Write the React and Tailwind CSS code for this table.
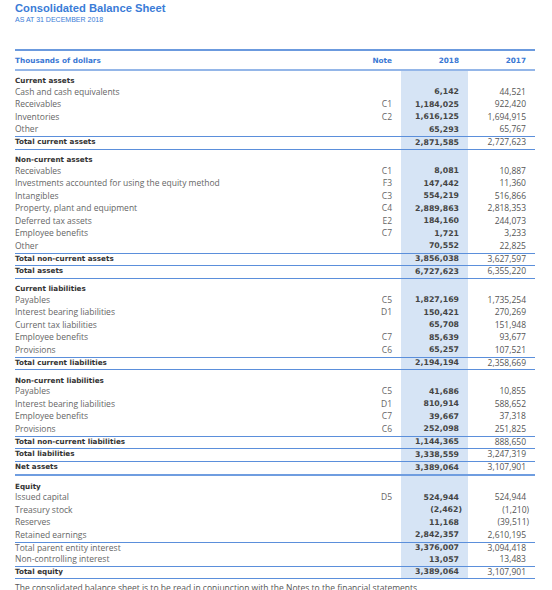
const sheet = [
  { kind: "head", label: "Current assets" },
  { label: "Cash and cash equivalents", cur: "6,142", prev: "44,521" },
  { label: "Receivables", note: "C1", cur: "1,184,025", prev: "922,420" },
  { label: "Inventories", note: "C2", cur: "1,616,125", prev: "1,694,915" },
  { label: "Other", cur: "65,293", prev: "65,767" },
  { kind: "total", top: true, label: "Total current assets", cur: "2,871,585", prev: "2,727,623" },
  { kind: "head", label: "Non-current assets" },
  { label: "Receivables", note: "C1", cur: "8,081", prev: "10,887" },
  { label: "Investments accounted for using the equity method", note: "F3", cur: "147,442", prev: "11,360" },
  { label: "Intangibles", note: "C3", cur: "554,219", prev: "516,866" },
  { label: "Property, plant and equipment", note: "C4", cur: "2,889,863", prev: "2,818,353" },
  { label: "Deferred tax assets", note: "E2", cur: "184,160", prev: "244,073" },
  { label: "Employee benefits", note: "C7", cur: "1,721", prev: "3,233" },
  { label: "Other", cur: "70,552", prev: "22,825" },
  { kind: "total", top: true, label: "Total non-current assets", cur: "3,856,038", prev: "3,627,597" },
  { kind: "total", label: "Total assets", cur: "6,727,623", prev: "6,355,220" },
  { kind: "head", label: "Current liabilities" },
  { label: "Payables", note: "C5", cur: "1,827,169", prev: "1,735,254" },
  { label: "Interest bearing liabilities", note: "D1", cur: "150,421", prev: "270,269" },
  { label: "Current tax liabilities", cur: "65,708", prev: "151,948" },
  { label: "Employee benefits", note: "C7", cur: "85,639", prev: "93,677" },
  { label: "Provisions", note: "C6", cur: "65,257", prev: "107,521" },
  { kind: "total", top: true, label: "Total current liabilities", cur: "2,194,194", prev: "2,358,669" },
  { kind: "head", label: "Non-current liabilities" },
  { label: "Payables", note: "C5", cur: "41,686", prev: "10,855" },
  { label: "Interest bearing liabilities", note: "D1", cur: "810,914", prev: "588,652" },
  { label: "Employee benefits", note: "C7", cur: "39,667", prev: "37,318" },
  { label: "Provisions", note: "C6", cur: "252,098", prev: "251,825" },
  { kind: "total", top: true, label: "Total non-current liabilities", cur: "1,144,365", prev: "888,650" },
  { kind: "total", label: "Total liabilities", cur: "3,338,559", prev: "3,247,319" },
  { kind: "total", tall: true, label: "Net assets", cur: "3,389,064", prev: "3,107,901" },
  { kind: "head", label: "Equity" },
  { label: "Issued capital", note: "D5", cur: "524,944", prev: "524,944" },
  { label: "Treasury stock", cur: "(2,462)", prev: "(1,210)" },
  { label: "Reserves", cur: "11,168", prev: "(39,511)" },
  { label: "Retained earnings", cur: "2,842,357", prev: "2,610,195" },
  { kind: "sub", top: true, label: "Total parent entity interest", cur: "3,376,007", prev: "3,094,418" },
  { kind: "plain", label: "Non-controlling interest", cur: "13,057", prev: "13,483" },
  { kind: "total", top: true, label: "Total equity", cur: "3,389,064", prev: "3,107,901" },
];

const sans = "font-['Open_Sans',sans-serif]";
const dejaBold = "font-['DejaVu_Sans',sans-serif] font-bold";

function Amount({ value }) {
  const neg = value && value.startsWith("(");
  return <span className={neg ? "mr-[-3px]" : ""}>{value}</span>;
}

function Row({ row }) {
  if (row.kind === "head") {
    return (
      <div className="flex pt-[4.5px]">
        <div className={`flex-1 h-[11px] leading-[11px] text-[7.2px] text-[#333] ${dejaBold}`}>{row.label}</div>
        <div className="w-[68px]" />
        <div className="w-[67px] bg-[#d6e4f5] -mt-[4.5px]" />
        <div className="w-[67px]" />
      </div>
    );
  }

  const isTotal = row.kind === "total";
  const lines = [
    row.top ? "border-t border-t-[#5b8fdb]" : "",
    isTotal && !row.tall ? "border-b border-b-[#5b8fdb]" : "",
    row.tall ? "border-b-2 border-b-[#6f9de0]" : "",
  ].join(" ");
  const h = row.tall ? "h-[12.5px]" : row.kind ? "h-[11.5px]" : "h-[12.5px]";

  return (
    <div className={`flex ${lines}`}>
      <div className={`flex-1 ${h} flex items-center`}>
        {isTotal ? (
          <span className={`text-[7.2px] text-[#333] ${dejaBold}`}>{row.label}</span>
        ) : (
          <span className={`text-[8.5px] text-[#666] ${sans}`}>{row.label}</span>
        )}
      </div>
      <div className={`w-[68px] ${h} flex items-center justify-end pr-[9px] text-[8.5px] text-[#666] ${sans}`}>
        {row.note}
      </div>
      <div className={`w-[67px] ${h} flex items-center justify-end pr-[9px] bg-[#d6e4f5] text-[7.8px] text-[#444] ${dejaBold}`}>
        <Amount value={row.cur} />
      </div>
      <div className={`w-[67px] ${h} flex items-center justify-end pr-[9px] text-[8.5px] text-[#555] ${sans}`}>
        <Amount value={row.prev} />
      </div>
    </div>
  );
}

export default function App() {
  return (
    <div className="w-[552px] h-[590px] overflow-hidden bg-white px-[15px] pt-[1px]">
      <h1 className="text-[11.2px] leading-[14px] font-bold text-[#3a7cd7] font-['Liberation_Sans',sans-serif]">
        Consolidated Balance Sheet
      </h1>
      <p className="text-[7px] leading-[9px] text-[#3a7cd7] font-['Liberation_Sans',sans-serif]">
        AS AT 31 DECEMBER 2018
      </p>

      <div className="w-[520px] mt-[25px]">
        <div className={`flex border-t-2 border-t-[#6b9ade] border-b-2 border-b-[#94b6e8] pt-[4px] pb-[2.5px] text-[7.3px] leading-[11px] text-[#3a78d4] ${dejaBold}`}>
          <div className="flex-1">Thousands of dollars</div>
          <div className="w-[68px] text-right pr-[9px]">Note</div>
          <div className="w-[67px] text-right pr-[9px]">2018</div>
          <div className="w-[67px] text-right pr-[9px]">2017</div>
        </div>
        {sheet.map((row, i) => (
          <Row key={i} row={row} />
        ))}
      </div>

      <p className={`mt-[3px] text-[8.5px] text-[#555] ${sans}`}>
        The consolidated balance sheet is to be read in conjunction with the Notes to the financial statements
      </p>
    </div>
  );
}
